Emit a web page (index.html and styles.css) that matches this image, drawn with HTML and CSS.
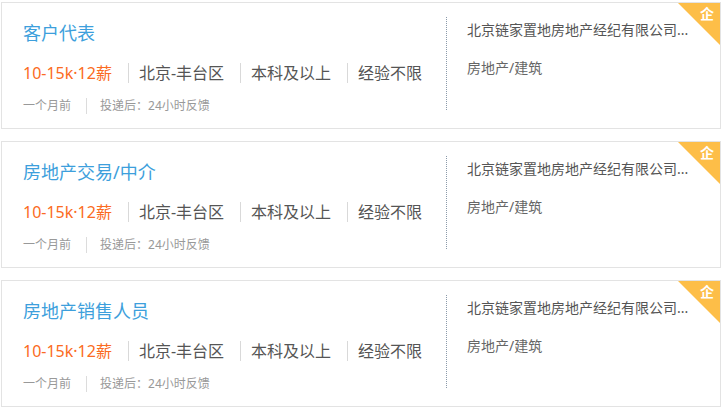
FILE: index.html
```html
<!DOCTYPE html>
<html lang="zh-CN">
<head>
  <meta charset="UTF-8" />
  <meta name="viewport" content="width=device-width, initial-scale=1.0"/>
  <title>职位列表</title>
  <link rel="stylesheet" href="styles.css">
</head>
<body>
  <div class="job-list">

    <div class="job-card">
      <div class="job-info">
        <h3 class="job-title">客户代表</h3>
        <div class="job-cond">
          <span class="salary">10-15k·12薪</span>
          <span>北京-丰台区</span>
          <span>本科及以上</span>
          <span>经验不限</span>
        </div>
        <div class="job-meta">
          <span>一个月前</span>
          <span>投递后：24小时反馈</span>
        </div>
      </div>
      <div class="company">
        <p class="company-name">北京链家置地房地产经纪有限公司...</p>
        <p class="industry">房地产/建筑</p>
      </div>
      <div class="badge"><span>企</span></div>
    </div>

    <div class="job-card">
      <div class="job-info">
        <h3 class="job-title">房地产交易/中介</h3>
        <div class="job-cond">
          <span class="salary">10-15k·12薪</span>
          <span>北京-丰台区</span>
          <span>本科及以上</span>
          <span>经验不限</span>
        </div>
        <div class="job-meta">
          <span>一个月前</span>
          <span>投递后：24小时反馈</span>
        </div>
      </div>
      <div class="company">
        <p class="company-name">北京链家置地房地产经纪有限公司...</p>
        <p class="industry">房地产/建筑</p>
      </div>
      <div class="badge"><span>企</span></div>
    </div>

    <div class="job-card">
      <div class="job-info">
        <h3 class="job-title">房地产销售人员</h3>
        <div class="job-cond">
          <span class="salary">10-15k·12薪</span>
          <span>北京-丰台区</span>
          <span>本科及以上</span>
          <span>经验不限</span>
        </div>
        <div class="job-meta">
          <span>一个月前</span>
          <span>投递后：24小时反馈</span>
        </div>
      </div>
      <div class="company">
        <p class="company-name">北京链家置地房地产经纪有限公司...</p>
        <p class="industry">房地产/建筑</p>
      </div>
      <div class="badge"><span>企</span></div>
    </div>

  </div>
</body>
</html>
```

FILE: styles.css
```css
* {
    margin: 0;
    padding: 0;
    box-sizing: border-box;
    font-family: "Noto Sans", "Noto Sans CJK SC", sans-serif;
}
body {
    background: #fff;
    padding: 2px 1px 0 1px;
}
.job-card {
    position: relative;
    display: flex;
    height: 127px;
    margin-bottom: 12px;
    border: 1px solid #e3e3e3;
    background: #fff;
    overflow: hidden;
}
.job-info {
    flex: 1;
    padding: 17px 0 0 21px;
}
.job-title {
    font-size: 18px;
    font-weight: normal;
    line-height: 26px;
    color: #3d9fdc;
}
.job-cond {
    display: flex;
    margin-top: 17px;
    font-size: 16px;
    line-height: 20px;
    color: #555;
}
.job-cond span {
    padding: 0 16px 0 10px;
    border-left: 1px solid #d9d9d9;
}
.job-cond span:first-child {
    padding-left: 0;
    border-left: none;
}
.job-cond .salary {
    color: #fb6b22;
}
.job-meta {
    display: flex;
    margin-top: 15px;
    font-size: 12px;
    line-height: 16px;
    color: #999;
}
.job-meta span {
    padding: 0 15px 0 13px;
    border-left: 1px solid #dcdcdc;
}
.job-meta span:first-child {
    padding-left: 0;
    border-left: none;
}
.company {
    width: 274px;
    height: 93px;
    margin-top: 14px;
    padding: 3px 28px 0 20px;
    border-left: 1px dotted #8b9aaa;
}
.company-name {
    font-size: 14px;
    line-height: 20px;
    color: #555;
    white-space: nowrap;
    overflow: hidden;
}
.industry {
    margin-top: 18px;
    font-size: 14px;
    line-height: 20px;
    color: #666;
}
.badge {
    position: absolute;
    top: 0;
    right: 0;
    width: 42px;
    height: 42px;
    background: #fdbe48;
    clip-path: polygon(0 0, 100% 0, 100% 100%);
}
.badge span {
    position: absolute;
    top: 4px;
    right: 6px;
    font-size: 14px;
    line-height: 14px;
    font-weight: bold;
    color: #fff;
}
```
